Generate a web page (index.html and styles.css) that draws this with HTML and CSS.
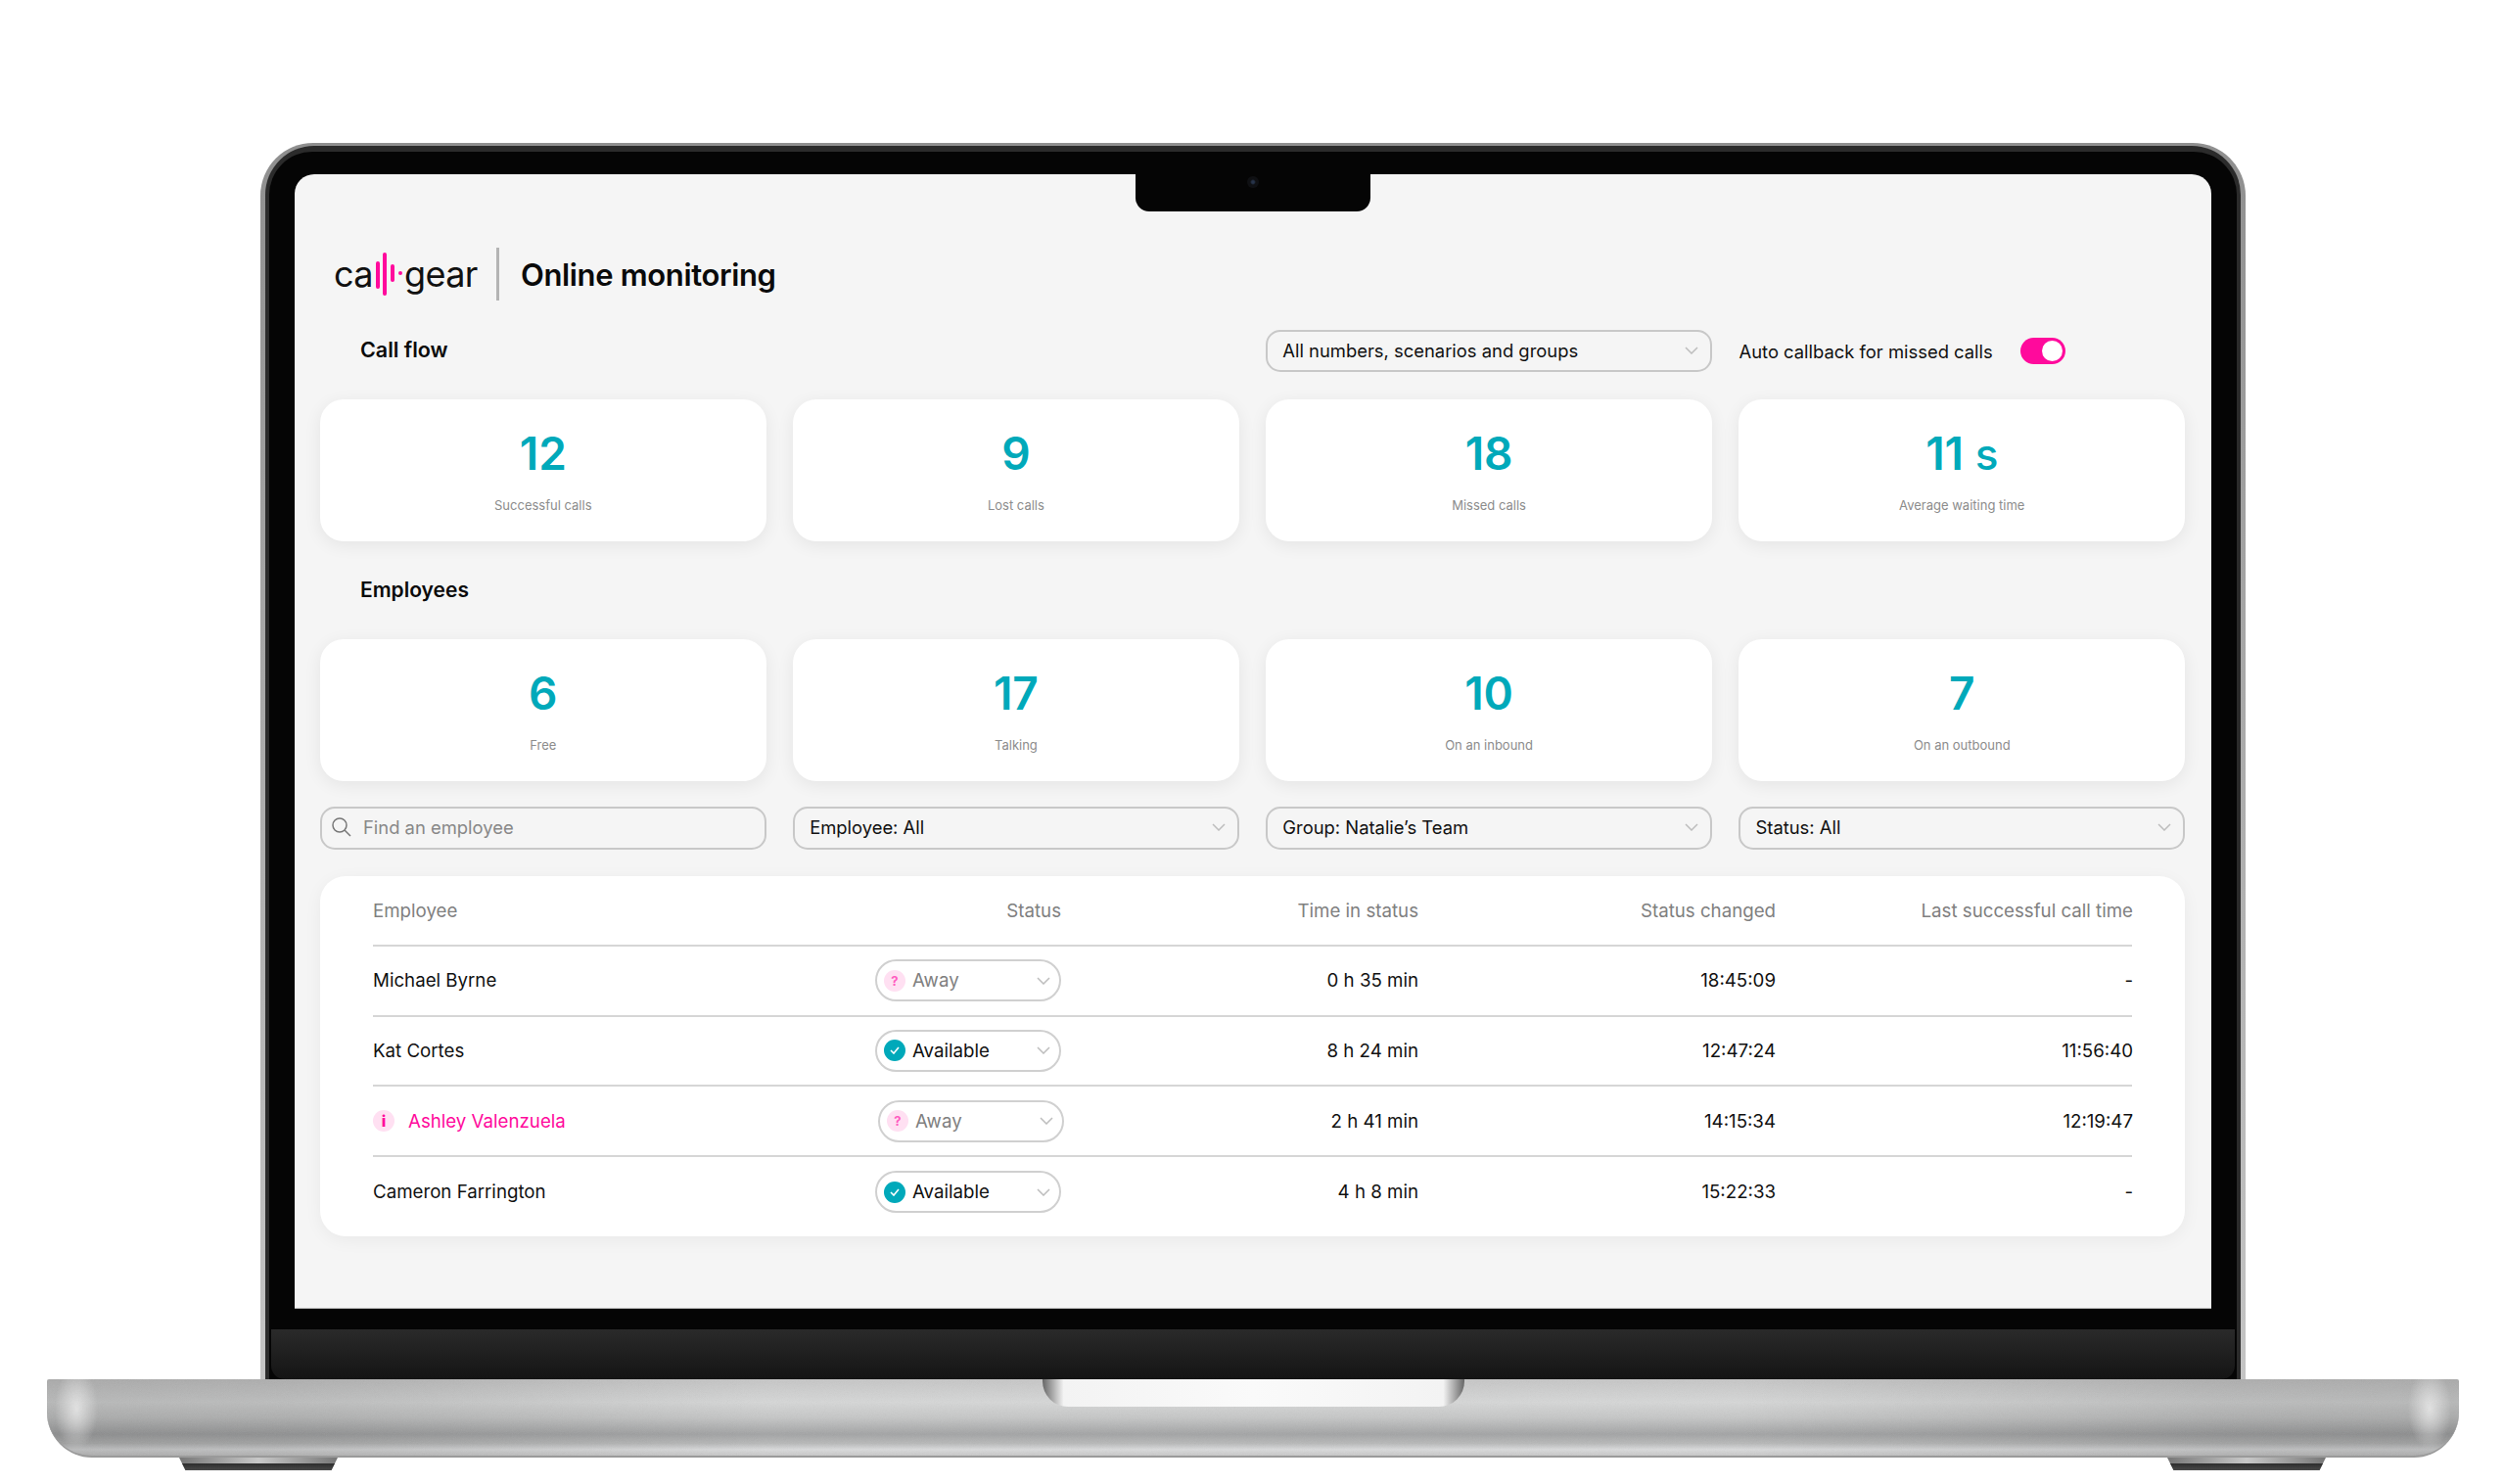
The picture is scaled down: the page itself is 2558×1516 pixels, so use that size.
FILE: index.html
```html
<!DOCTYPE html>
<html lang="en">
<head>
    <meta charset="UTF-8">
    <meta name="viewport" content="width=device-width, initial-scale=1.0">
    <title>Online monitoring</title>
    <link rel="stylesheet" href="styles.css">
</head>
<body>
    <div class="laptop">
        <div class="lid">
            <div class="lid-inner">
                <div class="bezel">
                    <div class="screen">
                        <div class="notch"><span class="camera"></span></div>

                        <div class="brand">
                            <div class="logo">
                                <span>ca</span>
                                <svg class="logo-bars" width="28" height="44" viewBox="0 0 28 44">
                                    <rect x="0" y="9" width="4" height="28" rx="2"/>
                                    <rect x="7" y="0" width="4" height="44" rx="2"/>
                                    <rect x="15" y="12" width="4" height="18" rx="2"/>
                                    <circle cx="25" cy="21" r="2"/>
                                </svg>
                                <span>gear</span>
                            </div>
                            <h1>Online monitoring</h1>
                        </div>

                        <div class="grid toolbar">
                            <h2>Call flow</h2>
                            <div></div>
                            <div class="field select">
                                All numbers, scenarios and groups
                                <svg class="chevron" width="14" height="8" viewBox="0 0 14 8"><path d="M1 1l6 6 6-6"/></svg>
                            </div>
                            <div class="callback">
                                <span>Auto callback for missed calls</span>
                                <span class="toggle"><span class="knob"></span></span>
                            </div>
                        </div>

                        <div class="grid">
                            <div class="card"><div class="num">12</div><div class="cap">Successful calls</div></div>
                            <div class="card"><div class="num">9</div><div class="cap">Lost calls</div></div>
                            <div class="card"><div class="num">18</div><div class="cap">Missed calls</div></div>
                            <div class="card"><div class="num">11 <small>s</small></div><div class="cap">Average waiting time</div></div>
                        </div>

                        <h2 class="employees">Employees</h2>

                        <div class="grid">
                            <div class="card"><div class="num">6</div><div class="cap">Free</div></div>
                            <div class="card"><div class="num">17</div><div class="cap">Talking</div></div>
                            <div class="card"><div class="num">10</div><div class="cap">On an inbound</div></div>
                            <div class="card"><div class="num">7</div><div class="cap">On an outbound</div></div>
                        </div>

                        <div class="grid filters">
                            <div class="field search">
                                <svg width="20" height="20" viewBox="0 0 20 20"><circle cx="8" cy="8" r="7"/><path d="M13 13l6 6"/></svg>
                                Find an employee
                            </div>
                            <div class="field select">
                                Employee: All
                                <svg class="chevron" width="14" height="8" viewBox="0 0 14 8"><path d="M1 1l6 6 6-6"/></svg>
                            </div>
                            <div class="field select">
                                Group: Natalie’s Team
                                <svg class="chevron" width="14" height="8" viewBox="0 0 14 8"><path d="M1 1l6 6 6-6"/></svg>
                            </div>
                            <div class="field select">
                                Status: All
                                <svg class="chevron" width="14" height="8" viewBox="0 0 14 8"><path d="M1 1l6 6 6-6"/></svg>
                            </div>
                        </div>

                        <div class="table">
                            <div class="row head">
                                <div class="name">Employee</div>
                                <div>Status</div>
                                <div>Time in status</div>
                                <div>Status changed</div>
                                <div>Last successful call time</div>
                            </div>
                            <div class="row">
                                <div class="name">Michael Byrne</div>
                                <div class="cell-pill">
                                    <div class="pill away">
                                        <span class="dot dot-away">?</span>Away
                                        <svg class="chevron" width="14" height="8" viewBox="0 0 14 8"><path d="M1 1l6 6 6-6"/></svg>
                                    </div>
                                </div>
                                <div>0 h 35 min</div>
                                <div>18:45:09</div>
                                <div>-</div>
                            </div>
                            <div class="row">
                                <div class="name">Kat Cortes</div>
                                <div class="cell-pill">
                                    <div class="pill">
                                        <span class="dot dot-ok"><svg width="10" height="8" viewBox="0 0 10 8"><path d="M1 4l3 3 5-6"/></svg></span>Available
                                        <svg class="chevron" width="14" height="8" viewBox="0 0 14 8"><path d="M1 1l6 6 6-6"/></svg>
                                    </div>
                                </div>
                                <div>8 h 24 min</div>
                                <div>12:47:24</div>
                                <div>11:56:40</div>
                            </div>
                            <div class="row">
                                <div class="name alert"><span class="dot dot-info">i</span>Ashley Valenzuela</div>
                                <div class="cell-pill">
                                    <div class="pill away shifted">
                                        <span class="dot dot-away">?</span>Away
                                        <svg class="chevron" width="14" height="8" viewBox="0 0 14 8"><path d="M1 1l6 6 6-6"/></svg>
                                    </div>
                                </div>
                                <div>2 h 41 min</div>
                                <div>14:15:34</div>
                                <div>12:19:47</div>
                            </div>
                            <div class="row last">
                                <div class="name">Cameron Farrington</div>
                                <div class="cell-pill">
                                    <div class="pill">
                                        <span class="dot dot-ok"><svg width="10" height="8" viewBox="0 0 10 8"><path d="M1 4l3 3 5-6"/></svg></span>Available
                                        <svg class="chevron" width="14" height="8" viewBox="0 0 14 8"><path d="M1 1l6 6 6-6"/></svg>
                                    </div>
                                </div>
                                <div>4 h 8 min</div>
                                <div>15:22:33</div>
                                <div>-</div>
                            </div>
                        </div>
                    </div>
                    <div class="hinge"></div>
                </div>
            </div>
        </div>
        <div class="base">
            <svg class="grain" width="2464" height="80">
                <filter id="noise"><feTurbulence type="fractalNoise" baseFrequency="0.9" numOctaves="2"/><feColorMatrix type="saturate" values="0"/></filter>
                <rect width="2464" height="80" filter="url(#noise)"/>
            </svg>
            <div class="thumb"></div>
        </div>
        <div class="feet"><div class="foot"></div><div class="foot"></div></div>
    </div>
</body>
</html>
```

FILE: styles.css
```css
* {
    box-sizing: border-box;
}
body {
    margin: 0;
    background-color: #fff;
    font-family: 'Inter', 'Liberation Sans', sans-serif;
    font-size: 18.4px;
    color: #111;
}
.laptop {
    width: 2558px;
    height: 1516px;
    padding-top: 146px;
    overflow: hidden;
}

/* lid and bezel */
.lid {
    width: 2028px;
    height: 1263px;
    margin-left: 266px;
    padding: 3px 5px 0;
    border-radius: 54px 54px 0 0;
    background: linear-gradient(#8f8f8f, #a6a6a6 40%, #c4c4c4);
}
.lid-inner {
    height: 100%;
    padding: 6px 4px 0;
    border-radius: 50px 50px 0 0;
    background-color: #2b2b2b;
}
.bezel {
    height: 100%;
    padding: 23px 26px 0;
    border-radius: 44px 44px 0 0;
    background-color: #050505;
}
.screen {
    position: relative;
    height: 1159px;
    padding: 75px 27px 0 26px;
    border-radius: 20px 20px 0 0;
    border-bottom: 1px solid #bbb;
    background-color: #f5f5f5;
}
.hinge {
    height: 51px;
    margin: 21px -24px 0;
    border-radius: 0 0 14px 14px;
    background: linear-gradient(#2a2a2a, #141414);
}
.notch {
    position: absolute;
    left: 859px;
    top: 0;
    width: 240px;
    height: 38px;
    display: flex;
    justify-content: center;
    padding-top: 2px;
    border-radius: 0 0 14px 14px;
    background-color: #050505;
}
.camera {
    width: 12px;
    height: 12px;
    border-radius: 50%;
    background: radial-gradient(#27344a 15%, #0f1013 35%);
}

/* header */
.brand {
    display: flex;
    align-items: center;
    height: 54px;
    margin-left: 14px;
}
.logo {
    display: flex;
    align-items: center;
    width: 169px;
    height: 54px;
    border-right: 3px solid #b4b4b4;
    font-size: 36px;
    font-weight: 400;
    letter-spacing: -0.6px;
}
.logo-bars {
    margin: 0 1px 0 3px;
    fill: #ff0a9c;
}
h1 {
    margin: 0 0 0 22px;
    font-size: 31px;
    font-weight: 600;
    letter-spacing: -0.35px;
    color: #0a0a0a;
}
h2 {
    margin: 0;
    font-size: 21px;
    font-weight: 600;
    color: #0a0a0a;
}

/* grids and cards */
.grid {
    display: grid;
    grid-template-columns: repeat(4, 1fr);
    gap: 27.67px;
}
.toolbar {
    height: 43px;
    margin: 30px 0 28px;
    align-items: center;
}
.toolbar h2 {
    padding: 0 0 3px 41px;
    font-size: 21.5px;
}
.employees {
    height: 100px;
    padding-left: 41px;
    line-height: 100px;
}
.card {
    height: 145px;
    padding-top: 30px;
    border-radius: 24px;
    background-color: #fff;
    box-shadow: 0 4px 18px rgba(0, 0, 0, 0.07);
    text-align: center;
}
.num {
    height: 50px;
    font-size: 46px;
    font-weight: 600;
    line-height: 50px;
    color: #00a9ba;
}
.num small {
    font-size: 44px;
    font-weight: 500;
}
.cap {
    margin-top: 18px;
    font-size: 13px;
    line-height: 20px;
    color: #8c8c8c;
}

/* fields */
.field {
    display: flex;
    align-items: center;
    height: 43px;
    padding: 0 12px 2px 15px;
    border: 2px solid #c8c8c8;
    border-radius: 15px;
    background-color: #f5f5f5;
}
.select {
    justify-content: space-between;
}
.chevron {
    fill: none;
    stroke: #bdbdbd;
    stroke-width: 1.5;
}
.callback {
    display: flex;
    align-items: center;
    gap: 28px;
}
.toggle {
    display: flex;
    align-items: center;
    justify-content: flex-end;
    width: 46px;
    height: 27px;
    padding-right: 3px;
    border-radius: 14px;
    background-color: #ff0a9c;
}
.knob {
    width: 21px;
    height: 21px;
    border-radius: 50%;
    background-color: #fff;
}
.filters {
    margin-top: 26px;
}
.filters .field {
    height: 44px;
}
.search {
    gap: 12px;
    padding-left: 10px;
    color: #888;
}
.search svg {
    fill: none;
    stroke: #777;
    stroke-width: 1.5;
}

/* table */
.table {
    height: 368px;
    margin-top: 27px;
    padding: 0 54px;
    border-radius: 26px;
    background-color: #fff;
    box-shadow: 0 4px 18px rgba(0, 0, 0, 0.05);
}
.row {
    display: grid;
    grid-template-columns: 338px 365px 365px 365px 365px;
    align-items: center;
    height: 71.67px;
    border-bottom: 2px solid #d6d6d6;
    font-size: 18.7px;
    text-align: right;
}
.row.last {
    border-bottom: none;
}
.row.head {
    height: 72px;
    color: #808080;
}
.row > .name {
    text-align: left;
}
.name.alert {
    display: flex;
    align-items: center;
    gap: 14px;
    color: #ff0a9c;
}
.cell-pill {
    display: flex;
    justify-content: flex-end;
}
.pill {
    display: flex;
    align-items: center;
    gap: 7px;
    width: 190px;
    height: 43px;
    padding: 0 9px 0 7px;
    border: 2px solid #d0d0d0;
    border-radius: 22px;
    text-align: left;
}
.pill .chevron {
    margin-left: auto;
}
.pill.away {
    color: #808080;
}
.pill.shifted {
    margin-right: -3px;
}
.dot {
    display: flex;
    align-items: center;
    justify-content: center;
    flex: none;
    width: 22px;
    height: 22px;
    border-radius: 50%;
    font-size: 13px;
    font-weight: 700;
}
.dot-away {
    background-color: #ffe0f2;
    color: #ff5cc0;
}
.dot-ok {
    background-color: #00a9ba;
}
.dot-ok svg {
    fill: none;
    stroke: #fff;
    stroke-width: 1.6;
}
.dot-info {
    background-color: #ffe0f2;
    color: #ff0a9c;
    font-size: 16px;
    font-weight: 800;
}

/* base */
.base {
    position: relative;
    width: 2464px;
    height: 80px;
    margin-left: 48px;
    overflow: hidden;
    border-radius: 2px 2px 46px 46px;
    border-bottom: 2px solid #9a9a9a;
    background:
        radial-gradient(ellipse 22px 42px at 30px 30px, rgba(235, 235, 235, 0.85), rgba(235, 235, 235, 0)),
        radial-gradient(ellipse 22px 42px at 2434px 30px, rgba(235, 235, 235, 0.85), rgba(235, 235, 235, 0)),
        linear-gradient(to right, rgba(0, 0, 0, 0.14), rgba(0, 0, 0, 0.12) 10%, rgba(0, 0, 0, 0) 30%, rgba(0, 0, 0, 0) 70%, rgba(0, 0, 0, 0.12) 90%, rgba(0, 0, 0, 0.14)),
        linear-gradient(#c6c6c6, #d6d7d7 30%, #c6c7c7 50%, #a3a4a5 72%, #b8b9b9 84%, #dadbdc 92%, #c8c8c8);
}
.grain {
    position: absolute;
    left: 0;
    top: 0;
    opacity: 0.1;
}
.thumb {
    position: relative;
    width: 431px;
    height: 28px;
    margin: 0 auto;
    border-radius: 0 0 26px 26px;
    background: linear-gradient(to right, #666, #f3f3f3 5%, #fafafa 50%, #f3f3f3 95%, #666);
}
.feet {
    display: flex;
    justify-content: space-between;
    width: 2464px;
    margin-left: 48px;
    padding: 0 136px 0 135px;
}
.foot {
    width: 162px;
    height: 13px;
    clip-path: polygon(0 0, 100% 0, 96% 100%, 4% 100%);
    background:
        linear-gradient(#0000 0, #0000 45%, #2f2f2f 50%, #4a4a4a 100%),
        linear-gradient(to right, #777, #c8c8c8 50%, #777);
}
```
